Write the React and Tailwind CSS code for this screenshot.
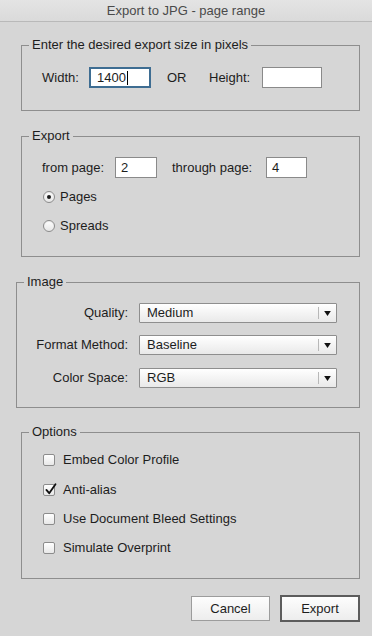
import React from "react";

const font = { fontFamily: '"Liberation Sans", Arial, sans-serif' };

function Legend({ children }) {
  return (
    <legend className="ml-[7px] px-[3px] leading-4 text-[13px] text-[#1d1d1d]">{children}</legend>
  );
}

function Radio({ checked }) {
  return (
    <span className="flex h-[12px] w-[12px] items-center justify-center rounded-full border border-[#8c8c8c] bg-gradient-to-b from-white to-[#e6e6e6] shadow-[inset_0_1px_1px_rgba(0,0,0,0.08)]">
      {checked && <span className="h-[4px] w-[4px] rounded-full bg-[#1a1a1a]" />}
    </span>
  );
}

function Checkbox({ checked }) {
  return (
    <span className="relative flex h-[12px] w-[12px] items-center justify-center rounded-[2px] border border-[#8c8c8c] bg-gradient-to-b from-white to-[#e8e8e8]">
      {checked && (
        <svg viewBox="0 0 12 12" className="absolute left-[0px] top-[-2px] h-[13px] w-[13px]">
          <path d="M2.2 6.4 L4.8 9.4 L10.6 1.2" fill="none" stroke="#111" strokeWidth="1.7" strokeLinecap="round" strokeLinejoin="round" />
        </svg>
      )}
    </span>
  );
}

function Select({ value }) {
  return (
    <div className="relative flex h-[20px] w-[198px] items-center rounded-[1px] border border-[#8e8e8e] bg-gradient-to-b from-white to-[#e9e9e9] pl-[7px] text-[13px] text-[#1d1d1d]">
      <span className="flex-1">{value}</span>
      <span className="h-[12px] w-px bg-[#b8b8b8]" />
      <span className="flex w-[17px] items-center justify-center">
        <svg viewBox="0 0 8 6" className="h-[5px] w-[7px]">
          <path d="M0 0 L8 0 L4 6 Z" fill="#111" />
        </svg>
      </span>
    </div>
  );
}

export default function App() {
  return (
    <div style={font} className="h-[636px] w-[372px] overflow-hidden bg-[#d6d6d6] text-[13px] text-[#1d1d1d]">
      {/* Title bar */}
      <div className="flex h-[22px] items-center justify-center border-b border-[#b9b9b9] bg-gradient-to-b from-[#e4e4e4] to-[#dadada] text-[13px] text-[#4a4a4a]">
        Export to JPG - page range
      </div>

      {/* Group 1 */}
      <fieldset className="ml-[21px] mr-[12px] mt-[15px] border border-[#8e8e8e]">
        <Legend>Enter the desired export size in pixels</Legend>
        <div className="flex items-center pb-[22px] pl-[20px] pt-[14px]">
          <span className="w-[47px]">Width:</span>
          <div className="flex h-[21px] w-[62px] items-center border-2 border-[#3e6d92] bg-white pl-[6px]">
            <span>1400</span>
            <span className="ml-px h-[14px] w-px bg-black" />
          </div>
          <span className="ml-[16px] w-[42px]">OR</span>
          <span className="w-[53px]">Height:</span>
          <div className="h-[21px] w-[60px] border border-[#8a8a8a] bg-white" />
        </div>
      </fieldset>

      {/* Group 2 */}
      <fieldset className="ml-[21px] mr-[12px] mt-[17px] border border-[#8e8e8e]">
        <Legend>Export</Legend>
        <div className="pb-[21px] pl-[20px] pt-[13px]">
          <div className="flex items-center">
            <span className="w-[73px]">from page:</span>
            <div className="flex h-[21px] w-[42px] items-center border border-[#8a8a8a] bg-white pl-[5px]">2</div>
            <span className="ml-[15px] w-[94px]">through page:</span>
            <div className="flex h-[21px] w-[41px] items-center border border-[#8a8a8a] bg-white pl-[5px]">4</div>
          </div>
          <div className="ml-px mt-[10px] flex h-[18px] items-center gap-[5px]">
            <Radio checked />
            <span>Pages</span>
          </div>
          <div className="ml-px mt-[11px] flex h-[18px] items-center gap-[5px]">
            <Radio />
            <span>Spreads</span>
          </div>
        </div>
      </fieldset>

      {/* Group 3 */}
      <fieldset className="ml-[16px] mr-[12px] mt-[17px] border border-[#8e8e8e]">
        <Legend>Image</Legend>
        <div className="flex flex-col pb-[19px] pt-[13px]">
          <div className="flex items-center">
            <span className="w-[111px] text-right">Quality:</span>
            <div className="ml-[11px]"><Select value="Medium" /></div>
          </div>
          <div className="mt-[12px] flex items-center">
            <span className="w-[111px] text-right">Format Method:</span>
            <div className="ml-[11px]"><Select value="Baseline" /></div>
          </div>
          <div className="mt-[13px] flex items-center">
            <span className="w-[111px] text-right">Color Space:</span>
            <div className="ml-[11px]"><Select value="RGB" /></div>
          </div>
        </div>
      </fieldset>

      {/* Group 4 */}
      <fieldset className="ml-[21px] mr-[12px] mt-[16px] border border-[#8e8e8e]">
        <Legend>Options</Legend>
        <div className="flex flex-col pb-[21px] pl-[21px] pt-[11px]">
          <div className="flex h-[18px] items-center gap-[8px]">
            <Checkbox />
            <span>Embed Color Profile</span>
          </div>
          <div className="mt-[12px] flex h-[18px] items-center gap-[8px]">
            <Checkbox checked />
            <span>Anti-alias</span>
          </div>
          <div className="mt-[11px] flex h-[18px] items-center gap-[8px]">
            <Checkbox />
            <span>Use Document Bleed Settings</span>
          </div>
          <div className="mt-[11px] flex h-[18px] items-center gap-[8px]">
            <Checkbox />
            <span>Simulate Overprint</span>
          </div>
        </div>
      </fieldset>

      {/* Buttons */}
      <div className="mr-[12px] mt-[16px] flex items-center justify-end gap-[10px]">
        <button className="flex h-[25px] w-[79px] items-center justify-center border border-[#9c9c9c] bg-gradient-to-b from-[#fdfdfd] to-[#ededed] text-[13px] text-[#1d1d1d]">
          Cancel
        </button>
        <button className="flex h-[27px] w-[80px] items-center justify-center border-2 border-[#5c5c5c] bg-gradient-to-b from-[#fdfdfd] to-[#ededed] text-[13px] text-[#1d1d1d]">
          Export
        </button>
      </div>
    </div>
  );
}
